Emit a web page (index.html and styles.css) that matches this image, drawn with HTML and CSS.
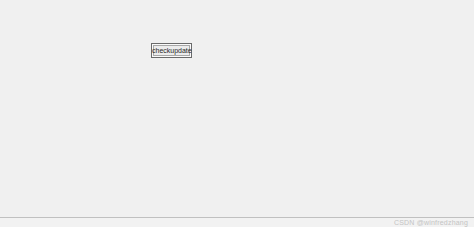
FILE: index.html
```html
<!DOCTYPE html>
<html>
<head>
<meta charset="utf-8">
<link rel="stylesheet" href="styles.css">
</head>
<body>
<div class="window">
  <div class="canvas">
    <button class="btn">checkupdate</button>
  </div>
  <div class="status">
    <span class="mark">CSDN @winfredzhang</span>
  </div>
</div>
</body>
</html>
```
FILE: styles.css
```css
html, body { margin: 0; padding: 0; }
body {
  width: 474px;
  height: 227px;
  background: #f0f0f0;
  font-family: "Liberation Sans", Arial, sans-serif;
  overflow: hidden;
}
.window {
  display: flex;
  flex-direction: column;
  height: 227px;
}
.canvas {
  height: 218px;
  padding: 43px 0 0 151px;
  box-sizing: border-box;
  border-bottom: 1px solid #c0c0c0;
}
.btn {
  display: block;
  width: 41px;
  height: 15px;
  padding: 0;
  margin: 0;
  background: #ececec;
  border: 1px solid #6a6a6a;
  box-shadow: inset 0 0 0 1px #fafafa, inset 0 0 0 2px #a8a8a8;
  font-family: "Liberation Sans", Arial, sans-serif;
  font-size: 7px;
  color: #2a2a2a;
  line-height: 13px;
}
.status {
  flex: 1;
  display: flex;
  justify-content: flex-end;
  align-items: center;
  padding-right: 6px;
  background: #f2f2f2;
}
.mark {
  font-size: 7px;
  color: #c4c4c4;
  letter-spacing: 0.2px;
}
```
